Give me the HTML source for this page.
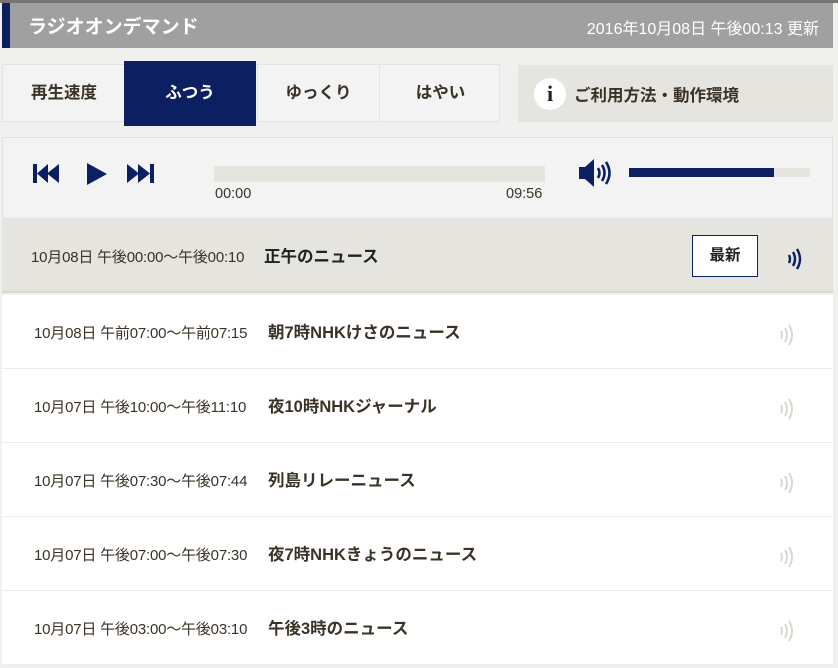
<!DOCTYPE html>
<html><head><meta charset="utf-8"><style>
*{margin:0;padding:0;box-sizing:border-box}
body{width:838px;height:668px;background:#f0f0ee;font-family:"Liberation Sans","Noto Sans CJK JP",sans-serif;color:#3a3226;position:relative;overflow:hidden}
.a{position:absolute}
.top{left:0;top:0;width:838px;height:3px;background:#7a7470}
.hdr{left:2px;top:3px;width:831px;height:45px;background:#a0a0a0;color:#fff}
.hdr .bar{position:absolute;left:0;top:0;width:8px;height:45px;background:#0c1f60}
.hdr .t{position:absolute;left:26px;top:9px;font-size:19px;font-weight:bold}
.hdr .d{position:absolute;right:14px;top:12px;font-size:16px}
.tabs{left:2px;top:64px;width:498px;height:58px;background:#f3f3f3;border:1px solid #e2e2e2}
.tab{position:absolute;top:0;height:56px;line-height:56px;text-align:center;font-size:16.5px;font-weight:bold}
.act{left:124px;top:61px;width:132px;height:65px;background:#0c1f60;color:#fff;line-height:64px;text-align:center;font-size:16.5px;font-weight:bold}
.info{left:518px;top:65px;width:315px;height:57px;background:#e5e4de}
.info .c{position:absolute;left:16px;top:13px;width:32px;height:32px;border-radius:50%;background:#fff;text-align:center;line-height:32px;font-family:"Liberation Serif",serif;font-weight:bold;font-size:22px;color:#222}
.info .x{position:absolute;left:56px;top:17px;font-size:16.5px;font-weight:bold}
.pl{left:2px;top:137px;width:831px;height:82px;background:#f3f3f3;border:1px solid #e0e0e0}
.cur{left:2px;top:219px;width:831px;height:74px;background:#e5e4de;border-bottom:2px solid #d8d7d0}
.row{position:absolute;left:2px;width:831px;height:74px;background:#fff;border-bottom:1px solid #ececec}
.tm{position:absolute;left:32px;top:27px;font-size:15px;letter-spacing:-0.2px;color:#3a3226}
.ti{position:absolute;left:266px;top:24px;font-size:16.5px;font-weight:bold}
</style></head><body>
<div class="a top"></div>
<div class="a hdr"><div class="bar"></div><div class="t">ラジオオンデマンド</div><div class="d">2016年10月08日 午後00:13 更新</div></div>
<div class="a tabs">
<div class="tab" style="left:0;width:122px">再生速度</div>
<div class="tab" style="left:254px;width:122px;border-left:1px solid #e2e2e2">ゆっくり</div>
<div class="tab" style="left:376px;width:122px;border-left:1px solid #e2e2e2">はやい</div>
</div>
<div class="a act">ふつう</div>
<div class="a info"><div class="c">i</div><div class="x">ご利用方法・動作環境</div></div>
<div class="a pl">
<svg class="a" style="left:30px;top:25px" width="130" height="22" viewBox="0 0 130 22" fill="#0c1f60">
<rect x="0" y="1" width="4" height="19"/><path d="M4 10.5L15 1V20Z M14 10.5L26 1V20Z"/>
<path d="M54 0L74 11L54 22Z"/>
<path d="M94 1L106 10.5L94 20Z M105 1L117 10.5L105 20Z"/><rect x="117" y="1" width="4" height="19"/>
</svg>
<div class="a" style="left:211px;top:28px;width:331px;height:16px;background:#e5e4de"></div>
<div class="a" style="left:212px;top:48px;font-size:14.5px">00:00</div>
<div class="a" style="left:503px;top:48px;font-size:14.5px">09:56</div>
<svg class="a" style="left:576px;top:20px" width="36" height="30" viewBox="0 0 36 30" fill="none" stroke="#0c1f60" stroke-width="2.6">
<path d="M0 9H6L15 1V29L6 21H0Z" fill="#0c1f60" stroke="none"/>
<path d="M19 10Q22 15 19 20M23 7Q28 15 23 23M27 4Q34 15 27 26"/>
</svg>
<div class="a" style="left:626px;top:30px;width:181px;height:9px;background:#e5e4de"></div>
<div class="a" style="left:626px;top:30px;width:145px;height:9px;background:#0c1f60"></div>
</div>
<div class="a cur">
<div class="a" style="left:29px;top:27px;font-size:15px;letter-spacing:-0.2px">10月08日 午後00:00〜午後00:10</div>
<div class="a" style="left:262px;top:24px;font-size:16.5px;font-weight:bold;color:#222">正午のニュース</div>
<div class="a" style="left:690px;top:16px;width:66px;height:42px;background:#fff;border:1px solid #0c1f60;text-align:center;line-height:40px;font-size:15.5px;font-weight:bold;color:#222">最新</div>
<svg class="a" style="left:784px;top:28px" width="18" height="24" viewBox="0 0 18 24" fill="none" stroke="#0c1f60" stroke-width="2.4"><path d="M3 8Q5 12 3 16M7 5Q11 12 7 19M11 2Q17 12 11 22"/></svg>
</div>
<div class="row" style="top:295px"><div class="tm">10月08日 午前07:00〜午前07:15</div><div class="ti">朝7時NHKけさのニュース</div><svg class="a" style="left:776px;top:28px" width="18" height="24" viewBox="0 0 18 24" fill="none" stroke="#d8d7d0" stroke-width="2"><path d="M3 8Q5 12 3 16M7 5Q11 12 7 19M11 2Q17 12 11 22"/></svg></div>
<div class="row" style="top:369px"><div class="tm">10月07日 午後10:00〜午後11:10</div><div class="ti">夜10時NHKジャーナル</div><svg class="a" style="left:776px;top:28px" width="18" height="24" viewBox="0 0 18 24" fill="none" stroke="#d8d7d0" stroke-width="2"><path d="M3 8Q5 12 3 16M7 5Q11 12 7 19M11 2Q17 12 11 22"/></svg></div>
<div class="row" style="top:443px"><div class="tm">10月07日 午後07:30〜午後07:44</div><div class="ti">列島リレーニュース</div><svg class="a" style="left:776px;top:28px" width="18" height="24" viewBox="0 0 18 24" fill="none" stroke="#d8d7d0" stroke-width="2"><path d="M3 8Q5 12 3 16M7 5Q11 12 7 19M11 2Q17 12 11 22"/></svg></div>
<div class="row" style="top:517px"><div class="tm">10月07日 午後07:00〜午後07:30</div><div class="ti">夜7時NHKきょうのニュース</div><svg class="a" style="left:776px;top:28px" width="18" height="24" viewBox="0 0 18 24" fill="none" stroke="#d8d7d0" stroke-width="2"><path d="M3 8Q5 12 3 16M7 5Q11 12 7 19M11 2Q17 12 11 22"/></svg></div>
<div class="row" style="top:591px"><div class="tm">10月07日 午後03:00〜午後03:10</div><div class="ti">午後3時のニュース</div><svg class="a" style="left:776px;top:28px" width="18" height="24" viewBox="0 0 18 24" fill="none" stroke="#d8d7d0" stroke-width="2"><path d="M3 8Q5 12 3 16M7 5Q11 12 7 19M11 2Q17 12 11 22"/></svg></div>
</body></html>
